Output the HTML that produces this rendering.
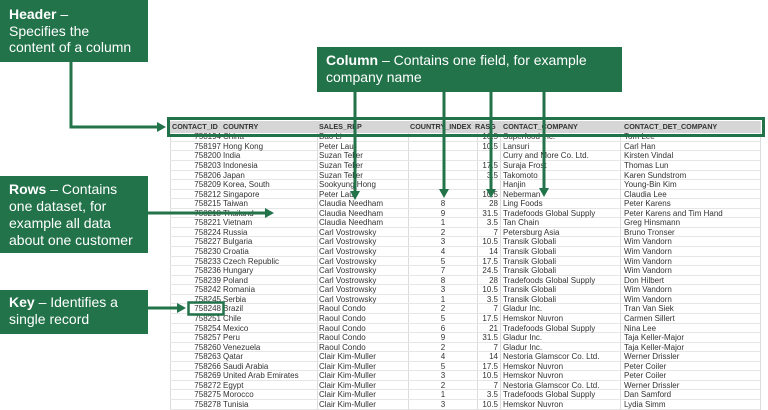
<!DOCTYPE html>
<html><head><meta charset="utf-8"><style>
*{margin:0;padding:0;box-sizing:border-box}
body{width:768px;height:410px;background:#fff;position:relative;overflow:hidden;font-family:"Liberation Sans",sans-serif}
.g{position:absolute;background:#22734a;color:#fff;font-size:14px;line-height:17px;padding:4px 9px}
.g b{font-weight:bold}
#tbl{position:absolute;left:170px;top:132.3px;width:590px}
.r{position:relative;height:9.57px;border-bottom:1px solid #e6e6e6;font-size:8px;line-height:9px;color:#333;white-space:nowrap}
.r span{position:absolute;top:0}
.a{right:539px}.b{left:53px}.c{left:149px}.d{left:268px;width:10px;text-align:center}.e{left:306px;width:22px;text-align:right}.f{left:333px}.h{left:454px}
.vl{position:absolute;top:121px;height:289px;width:1px;background:#dcdcdc}
#hdr{position:absolute;left:170px;top:121px;width:590px;height:12px;background:#d6d6d6;font-size:7.2px;font-weight:bold;color:#333;line-height:12px;white-space:nowrap}
#hdr span{position:absolute;top:0}
</style></head><body>
<div class="vl" style="left:170px"></div>
<div class="vl" style="left:317px"></div>
<div class="vl" style="left:408px"></div>
<div class="vl" style="left:477px"></div>
<div class="vl" style="left:500px"></div>
<div class="vl" style="left:620px"></div>
<div class="vl" style="left:760px"></div>
<div id="hdr"><span style="left:2px">CONTACT_ID</span><span style="left:53px">COUNTRY</span><span style="left:149px">SALES_REP</span><span style="left:240px">COUNTRY_INDEX</span><span style="left:305px">RASG</span><span style="left:333px">CONTACT_COMPANY</span><span style="left:454px">CONTACT_DET_COMPANY</span></div>
<div id="tbl">
<div class="r"><span class="a">758194</span><span class="b">China</span><span class="c">Bao Li</span><span class="d"></span><span class="e">10.5</span><span class="f">Superfood Inc.</span><span class="h">Tom Lee</span></div>
<div class="r"><span class="a">758197</span><span class="b">Hong Kong</span><span class="c">Peter Lau</span><span class="d"></span><span class="e">10.5</span><span class="f">Lansuri</span><span class="h">Carl Han</span></div>
<div class="r"><span class="a">758200</span><span class="b">India</span><span class="c">Suzan Teller</span><span class="d"></span><span class="e"></span><span class="f">Curry and More Co. Ltd.</span><span class="h">Kirsten Vindal</span></div>
<div class="r"><span class="a">758203</span><span class="b">Indonesia</span><span class="c">Suzan Teller</span><span class="d"></span><span class="e">17.5</span><span class="f">Suraja Frost</span><span class="h">Thomas Lun</span></div>
<div class="r"><span class="a">758206</span><span class="b">Japan</span><span class="c">Suzan Teller</span><span class="d"></span><span class="e">3.5</span><span class="f">Takomoto</span><span class="h">Karen Sundstrom</span></div>
<div class="r"><span class="a">758209</span><span class="b">Korea, South</span><span class="c">Sookyung Hong</span><span class="d"></span><span class="e"></span><span class="f">Hanjin</span><span class="h">Young-Bin Kim</span></div>
<div class="r"><span class="a">758212</span><span class="b">Singapore</span><span class="c">Peter Lau</span><span class="d"></span><span class="e">10.5</span><span class="f">Neberman</span><span class="h">Claudia Lee</span></div>
<div class="r"><span class="a">758215</span><span class="b">Taiwan</span><span class="c">Claudia Needham</span><span class="d">8</span><span class="e">28</span><span class="f">Ling Foods</span><span class="h">Peter Karens</span></div>
<div class="r"><span class="a">758218</span><span class="b">Thailand</span><span class="c">Claudia Needham</span><span class="d">9</span><span class="e">31.5</span><span class="f">Tradefoods Global Supply</span><span class="h">Peter Karens and Tim Hand</span></div>
<div class="r"><span class="a">758221</span><span class="b">Vietnam</span><span class="c">Claudia Needham</span><span class="d">1</span><span class="e">3.5</span><span class="f">Tan Chain</span><span class="h">Greg Hinsmann</span></div>
<div class="r"><span class="a">758224</span><span class="b">Russia</span><span class="c">Carl Vostrowsky</span><span class="d">2</span><span class="e">7</span><span class="f">Petersburg Asia</span><span class="h">Bruno Tronser</span></div>
<div class="r"><span class="a">758227</span><span class="b">Bulgaria</span><span class="c">Carl Vostrowsky</span><span class="d">3</span><span class="e">10.5</span><span class="f">Transik Globali</span><span class="h">Wim Vandorn</span></div>
<div class="r"><span class="a">758230</span><span class="b">Croatia</span><span class="c">Carl Vostrowsky</span><span class="d">4</span><span class="e">14</span><span class="f">Transik Globali</span><span class="h">Wim Vandorn</span></div>
<div class="r"><span class="a">758233</span><span class="b">Czech Republic</span><span class="c">Carl Vostrowsky</span><span class="d">5</span><span class="e">17.5</span><span class="f">Transik Globali</span><span class="h">Wim Vandorn</span></div>
<div class="r"><span class="a">758236</span><span class="b">Hungary</span><span class="c">Carl Vostrowsky</span><span class="d">7</span><span class="e">24.5</span><span class="f">Transik Globali</span><span class="h">Wim Vandorn</span></div>
<div class="r"><span class="a">758239</span><span class="b">Poland</span><span class="c">Carl Vostrowsky</span><span class="d">8</span><span class="e">28</span><span class="f">Tradefoods Global Supply</span><span class="h">Don Hilbert</span></div>
<div class="r"><span class="a">758242</span><span class="b">Romania</span><span class="c">Carl Vostrowsky</span><span class="d">3</span><span class="e">10.5</span><span class="f">Transik Globali</span><span class="h">Wim Vandorn</span></div>
<div class="r"><span class="a">758245</span><span class="b">Serbia</span><span class="c">Carl Vostrowsky</span><span class="d">1</span><span class="e">3.5</span><span class="f">Transik Globali</span><span class="h">Wim Vandorn</span></div>
<div class="r"><span class="a">758248</span><span class="b">Brazil</span><span class="c">Raoul Condo</span><span class="d">2</span><span class="e">7</span><span class="f">Gladur Inc.</span><span class="h">Tran Van Siek</span></div>
<div class="r"><span class="a">758251</span><span class="b">Chile</span><span class="c">Raoul Condo</span><span class="d">5</span><span class="e">17.5</span><span class="f">Hemskor Nuvron</span><span class="h">Carmen Sillert</span></div>
<div class="r"><span class="a">758254</span><span class="b">Mexico</span><span class="c">Raoul Condo</span><span class="d">6</span><span class="e">21</span><span class="f">Tradefoods Global Supply</span><span class="h">Nina Lee</span></div>
<div class="r"><span class="a">758257</span><span class="b">Peru</span><span class="c">Raoul Condo</span><span class="d">9</span><span class="e">31.5</span><span class="f">Gladur Inc.</span><span class="h">Taja Keller-Major</span></div>
<div class="r"><span class="a">758260</span><span class="b">Venezuela</span><span class="c">Raoul Condo</span><span class="d">2</span><span class="e">7</span><span class="f">Gladur Inc.</span><span class="h">Taja Keller-Major</span></div>
<div class="r"><span class="a">758263</span><span class="b">Qatar</span><span class="c">Clair Kim-Muller</span><span class="d">4</span><span class="e">14</span><span class="f">Nestoria Glamscor Co. Ltd.</span><span class="h">Werner Drissler</span></div>
<div class="r"><span class="a">758266</span><span class="b">Saudi Arabia</span><span class="c">Clair Kim-Muller</span><span class="d">5</span><span class="e">17.5</span><span class="f">Hemskor Nuvron</span><span class="h">Peter Coiler</span></div>
<div class="r"><span class="a">758269</span><span class="b">United Arab Emirates</span><span class="c">Clair Kim-Muller</span><span class="d">3</span><span class="e">10.5</span><span class="f">Hemskor Nuvron</span><span class="h">Peter Coiler</span></div>
<div class="r"><span class="a">758272</span><span class="b">Egypt</span><span class="c">Clair Kim-Muller</span><span class="d">2</span><span class="e">7</span><span class="f">Nestoria Glamscor Co. Ltd.</span><span class="h">Werner Drissler</span></div>
<div class="r"><span class="a">758275</span><span class="b">Morocco</span><span class="c">Clair Kim-Muller</span><span class="d">1</span><span class="e">3.5</span><span class="f">Tradefoods Global Supply</span><span class="h">Dan Samford</span></div>
<div class="r"><span class="a">758278</span><span class="b">Tunisia</span><span class="c">Clair Kim-Muller</span><span class="d">3</span><span class="e">10.5</span><span class="f">Hemskor Nuvron</span><span class="h">Lydia Simm</span></div>
</div>

<svg width="768" height="410" style="position:absolute;left:0;top:0" fill="none" stroke="#22734a" stroke-width="3">
<rect x="168.5" y="118.5" width="595" height="17"/>
<polyline points="71,60 71,127 158,127"/>
<polygon points="157,122 166,127 157,132" fill="#22734a" stroke="none"/>
<line x1="355" y1="90" x2="355" y2="192"/><polygon points="350,191 355,200 360,191" fill="#22734a" stroke="none"/>
<line x1="444" y1="90" x2="444" y2="190"/><polygon points="439,189 444,198 449,189" fill="#22734a" stroke="none"/>
<line x1="491" y1="90" x2="491" y2="190"/><polygon points="486,189 491,198 496,189" fill="#22734a" stroke="none"/>
<line x1="544" y1="90" x2="544" y2="189"/><polygon points="539,188 544,197 549,188" fill="#22734a" stroke="none"/>
<line x1="148" y1="213" x2="266" y2="213"/><polygon points="265,208 274,213 265,218" fill="#22734a" stroke="none"/>
<line x1="148" y1="308" x2="178" y2="308"/><polygon points="177,303 186,308 177,313" fill="#22734a" stroke="none"/>
<rect x="188.5" y="302.5" width="35" height="12" stroke-width="2.5"/>
</svg>

<div class="g" style="left:0;top:0;width:148px;height:62px;line-height:16.5px;padding:6px 9px"><b>Header</b> –<br>Specifies the<br>content of a column</div>
<div class="g" style="left:317px;top:47px;width:305px;height:45px;padding:5px 9px"><b>Column</b> – Contains one field, for example company name</div>
<div class="g" style="left:0;top:176px;width:148px;height:77px;padding:5px 9px;line-height:17px"><b>Rows</b> – Contains one dataset, for example all data about one customer</div>
<div class="g" style="left:0;top:290px;width:148px;height:44px;padding:4px 9px"><b>Key</b> – Identifies a single record</div>
</body></html>
